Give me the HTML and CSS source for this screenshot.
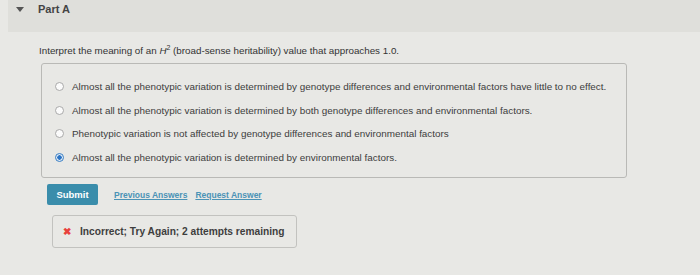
FILE: index.html
```html
<!DOCTYPE html>
<html lang="en">

<head>
    <meta charset="UTF-8" />
    <meta name="viewport" content="width=device-width, initial-scale=1.0" />
    <title>Part A</title>
    <link rel="stylesheet" href="styles.css">
</head>

<body>
    <div class="part-header">
        <span class="caret"></span>
        <span class="part-title">Part A</span>
    </div>
    <div class="part-body">
        <p class="question">Interpret the meaning of an <i>H</i><sup>2</sup> (broad-sense heritability) value that approaches 1.0.</p>
        <div class="choices">
            <label class="choice"><span class="radio"></span>Almost all the phenotypic variation is determined by genotype differences and environmental factors have little to no effect.</label>
            <label class="choice"><span class="radio"></span>Almost all the phenotypic variation is determined by both genotype differences and environmental factors.</label>
            <label class="choice"><span class="radio"></span>Phenotypic variation is not affected by genotype differences and environmental factors</label>
            <label class="choice"><span class="radio checked"></span>Almost all the phenotypic variation is determined by environmental factors.</label>
        </div>
        <div class="actions">
            <button class="submit">Submit</button>
            <a href="#" class="link">Previous Answers</a>
            <a href="#" class="link">Request Answer</a>
        </div>
        <div class="feedback">
            <span class="cross">&#10006;</span>
            Incorrect; Try Again; 2 attempts remaining
        </div>
    </div>
</body>

</html>
```

FILE: styles.css
```css
body {
    margin: 0;
    background-color: #e8e8e5;
    color: #3a3a3a;
    font-family: "Liberation Sans", Arial, sans-serif;
    height: 275px;
    overflow: hidden;
}

.part-header {
    display: flex;
    align-items: center;
    height: 32px;
    padding-left: 8px;
    margin-left: 8px;
    background-color: #dfdfdb;
    box-sizing: border-box;
    padding-bottom: 14px;
}

.caret {
    width: 0;
    height: 0;
    border-left: 4px solid transparent;
    border-right: 4px solid transparent;
    border-top: 5px solid #555;
    margin-right: 14px;
}

.part-title {
    font-size: 11px;
    font-weight: bold;
    color: #444;
}

.part-body {
    padding: 13px 0 0 39px;
}

.question {
    margin: 0;
    font-size: 9.8px;
    color: #333;
}

.question sup {
    font-size: 7px;
    line-height: 0;
}

.choices {
    margin: 7px 0 0 2px;
    width: 586px;
    padding: 11px 0 8px 13px;
    border: 1px solid #b9b9b6;
    border-radius: 3px;
    box-sizing: border-box;
}

.choice {
    display: flex;
    align-items: center;
    height: 23.5px;
    font-size: 9.9px;
    color: #3c3c3c;
}

.radio {
    width: 7px;
    height: 7px;
    border: 1px solid #a9a9a9;
    border-radius: 50%;
    background-color: #fbfbfb;
    margin: 0 8px 0 0;
    flex-shrink: 0;
}

.radio.checked {
    border-color: #3a7fc4;
    background: radial-gradient(circle, #2a73c5 40%, #dfeaf5 50%);
}

.actions {
    display: flex;
    align-items: center;
    margin: 6px 0 0 8px;
}

.submit {
    width: 51px;
    height: 21px;
    border: none;
    border-radius: 2px;
    background-color: #3a8dab;
    color: #fff;
    font-family: inherit;
    font-size: 9.5px;
    font-weight: bold;
    padding: 0;
    margin-right: 16px;
}

.link {
    color: #4b93b6;
    font-size: 8.5px;
    font-weight: bold;
    margin-right: 8px;
}

.feedback {
    display: flex;
    align-items: center;
    width: 245px;
    height: 33px;
    margin: 10px 0 0 13px;
    padding-left: 10px;
    border: 1px solid #c2c2bf;
    border-radius: 3px;
    box-sizing: border-box;
    font-size: 10.2px;
    font-weight: bold;
    color: #3e3e3e;
}

.cross {
    color: #e8413c;
    font-size: 10px;
    margin-right: 9px;
}
```
